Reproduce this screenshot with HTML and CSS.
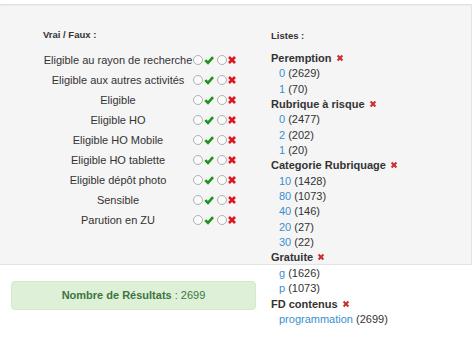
FILE: index.html
```html
<!DOCTYPE html>
<html lang="fr">
<head>
    <meta charset="UTF-8">
    <title>Recherche</title>
    <link rel="stylesheet" href="styles.css">
</head>
<body>

<!-- Filtres -->
<div class="well">
    <div class="col-bool">
        <div class="col-title">Vrai / Faux :</div>
        <table class="bool-table">
            <tr><td class="label">Eligible au rayon de recherche</td><td class="choices"><span class="radio"></span><svg class="ok" viewBox="0 0 10 10"><polyline points="1.3,5.2 4,7.9 9,2.2"/></svg><span class="radio"></span><svg class="ko" viewBox="0 0 10 10"><path d="M2,2 L8,8 M8,2 L2,8"/></svg></td></tr>
            <tr><td class="label">Eligible aux autres activités</td><td class="choices"><span class="radio"></span><svg class="ok" viewBox="0 0 10 10"><polyline points="1.3,5.2 4,7.9 9,2.2"/></svg><span class="radio"></span><svg class="ko" viewBox="0 0 10 10"><path d="M2,2 L8,8 M8,2 L2,8"/></svg></td></tr>
            <tr><td class="label">Eligible</td><td class="choices"><span class="radio"></span><svg class="ok" viewBox="0 0 10 10"><polyline points="1.3,5.2 4,7.9 9,2.2"/></svg><span class="radio"></span><svg class="ko" viewBox="0 0 10 10"><path d="M2,2 L8,8 M8,2 L2,8"/></svg></td></tr>
            <tr><td class="label">Eligible HO</td><td class="choices"><span class="radio"></span><svg class="ok" viewBox="0 0 10 10"><polyline points="1.3,5.2 4,7.9 9,2.2"/></svg><span class="radio"></span><svg class="ko" viewBox="0 0 10 10"><path d="M2,2 L8,8 M8,2 L2,8"/></svg></td></tr>
            <tr><td class="label">Eligible HO Mobile</td><td class="choices"><span class="radio"></span><svg class="ok" viewBox="0 0 10 10"><polyline points="1.3,5.2 4,7.9 9,2.2"/></svg><span class="radio"></span><svg class="ko" viewBox="0 0 10 10"><path d="M2,2 L8,8 M8,2 L2,8"/></svg></td></tr>
            <tr><td class="label">Eligible HO tablette</td><td class="choices"><span class="radio"></span><svg class="ok" viewBox="0 0 10 10"><polyline points="1.3,5.2 4,7.9 9,2.2"/></svg><span class="radio"></span><svg class="ko" viewBox="0 0 10 10"><path d="M2,2 L8,8 M8,2 L2,8"/></svg></td></tr>
            <tr><td class="label">Eligible dépôt photo</td><td class="choices"><span class="radio"></span><svg class="ok" viewBox="0 0 10 10"><polyline points="1.3,5.2 4,7.9 9,2.2"/></svg><span class="radio"></span><svg class="ko" viewBox="0 0 10 10"><path d="M2,2 L8,8 M8,2 L2,8"/></svg></td></tr>
            <tr><td class="label">Sensible</td><td class="choices"><span class="radio"></span><svg class="ok" viewBox="0 0 10 10"><polyline points="1.3,5.2 4,7.9 9,2.2"/></svg><span class="radio"></span><svg class="ko" viewBox="0 0 10 10"><path d="M2,2 L8,8 M8,2 L2,8"/></svg></td></tr>
            <tr><td class="label">Parution en ZU</td><td class="choices"><span class="radio"></span><svg class="ok" viewBox="0 0 10 10"><polyline points="1.3,5.2 4,7.9 9,2.2"/></svg><span class="radio"></span><svg class="ko" viewBox="0 0 10 10"><path d="M2,2 L8,8 M8,2 L2,8"/></svg></td></tr>
        </table>
    </div>

    <div class="col-lists">
        <div class="col-title">Listes :</div>
        <ul class="facets">
            <li class="facet">Peremption <svg class="remove" viewBox="0 0 10 10"><path d="M2,2 L8,8 M8,2 L2,8"/></svg></li>
            <li class="value"><a href="#">0</a> (2629)</li>
            <li class="value"><a href="#">1</a> (70)</li>
            <li class="facet">Rubrique à risque <svg class="remove" viewBox="0 0 10 10"><path d="M2,2 L8,8 M8,2 L2,8"/></svg></li>
            <li class="value"><a href="#">0</a> (2477)</li>
            <li class="value"><a href="#">2</a> (202)</li>
            <li class="value"><a href="#">1</a> (20)</li>
            <li class="facet">Categorie Rubriquage <svg class="remove" viewBox="0 0 10 10"><path d="M2,2 L8,8 M8,2 L2,8"/></svg></li>
            <li class="value"><a href="#">10</a> (1428)</li>
            <li class="value"><a href="#">80</a> (1073)</li>
            <li class="value"><a href="#">40</a> (146)</li>
            <li class="value"><a href="#">20</a> (27)</li>
            <li class="value"><a href="#">30</a> (22)</li>
            <li class="facet">Gratuite <svg class="remove" viewBox="0 0 10 10"><path d="M2,2 L8,8 M8,2 L2,8"/></svg></li>
            <li class="value"><a href="#">g</a> (1626)</li>
            <li class="value"><a href="#">p</a> (1073)</li>
            <li class="facet">FD contenus <svg class="remove" viewBox="0 0 10 10"><path d="M2,2 L8,8 M8,2 L2,8"/></svg></li>
            <li class="value"><a href="#">programmation</a> (2699)</li>
        </ul>
    </div>
</div>

<!-- Résultats -->
<div class="alert-success">
    <b>Nombre de Résultats</b> : 2699
</div>

</body>
</html>
```

FILE: styles.css
```css
/* Base */
* {
    box-sizing: border-box;
}

html, body {
    height: 100%;
}

body {
    margin: 0;
    font-family: "Liberation Sans", Arial, sans-serif;
    font-size: 11px;
    color: #333;
    background-color: #fff;
}

a {
    color: #3a8fd0;
    text-decoration: none;
}

/* Zone des filtres */
.well {
    display: flex;
    align-items: flex-start;
    width: 472px;
    height: 261px;
    margin-top: 4px;
    padding-left: 43px;
    background-color: #f5f5f5;
    border-top: 1px solid #e3e3e3;
    border-bottom: 1px solid #e3e3e3;
    border-right: 1px solid #e3e3e3;
    box-shadow: inset 0 1px 1px rgba(0, 0, 0, 0.04);
}

.col-bool {
    flex: none;
    width: 228px;
    padding-top: 20px;
}

.col-lists {
    flex: none;
    padding-top: 21px;
}

.col-title {
    font-size: 9.5px;
    font-weight: bold;
    line-height: 20px;
    margin-bottom: 5px;
}

/* Vrai / Faux */
.bool-table {
    border-collapse: collapse;
}

.bool-table td {
    padding: 0;
    height: 20px;
}

.bool-table .label {
    width: 150px;
    text-align: center;
    white-space: nowrap;
}

.choices {
    white-space: nowrap;
    font-size: 0;
}

.radio {
    display: inline-block;
    width: 10px;
    height: 10px;
    border: 1px solid #b0b0b0;
    border-radius: 50%;
    background-color: #fbfbfb;
    vertical-align: middle;
}

.ok, .ko {
    width: 10px;
    height: 10px;
    vertical-align: middle;
    fill: none;
    stroke-width: 2.6;
}

.ok {
    margin: 0 3px 0 1px;
    stroke: #1a931a;
}

.ko {
    stroke: #e0141e;
}

/* Listes */
.facets {
    list-style: none;
    margin: 0;
    padding: 0;
    line-height: 15.35px;
    white-space: nowrap;
}

.facet {
    font-weight: bold;
}

.value {
    padding-left: 8px;
}

.remove {
    width: 8px;
    height: 8px;
    margin-left: 1px;
    fill: none;
    stroke: #c9302c;
    stroke-width: 2.6;
}

/* Résultats */
.alert-success {
    width: 245px;
    height: 29px;
    margin: 16px 0 0 11px;
    background-color: #dff0d8;
    border: 1px solid #d6e9c6;
    border-radius: 4px;
    color: #3c763d;
    text-align: center;
    line-height: 27px;
}
```
